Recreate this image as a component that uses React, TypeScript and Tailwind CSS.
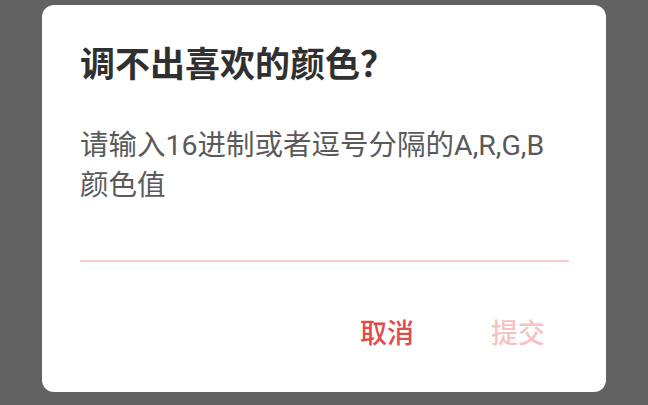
import React from "react";

export default function App() {
  return (
    <div
      className="w-[648px] h-[405px] bg-[#636263] overflow-hidden pt-[5px] pl-[42px]"
      style={{ fontFamily: 'Roboto, "Noto Sans CJK SC", sans-serif' }}
    >
      <div className="w-[564px] h-[387px] rounded-[12px] bg-white pt-[41px] pl-[38px] pr-[37px] flex flex-col">
        <div className="text-[35px] leading-[40px] font-bold text-[#303030]">调不出喜欢的颜色？</div>
        <div className="mt-[40px] text-[28.5px] leading-[40px] text-[#5a5a5a]">
          请输入16进制或者逗号分隔的A,R,G,B
          <br />
          颜色值
        </div>
        <div className="h-[56px] border-b-2 border-[#f9caca]" />
        <div className="mt-[48px] h-[48px] flex items-center justify-end pr-[24px] text-[27px] font-medium">
          <span className="text-[#e04b4b]">取消</span>
          <span className="ml-[77px] text-[#f6c2c2]">提交</span>
        </div>
      </div>
    </div>
  );
}
